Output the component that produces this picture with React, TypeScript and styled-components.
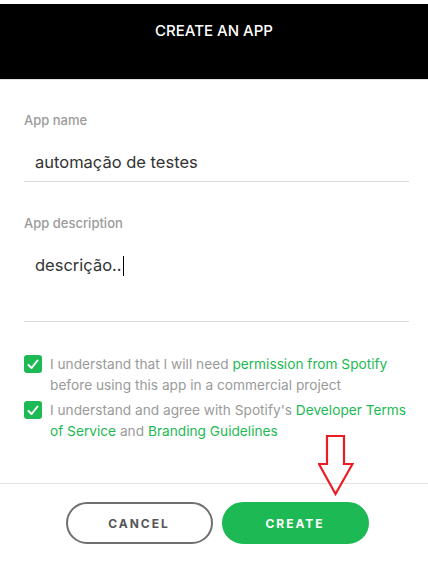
import React from "react";
import styled, { createGlobalStyle } from "styled-components";

const Global = createGlobalStyle`
  html, body { margin: 0; padding: 0; background: #fff; }
  body { font-family: Inter, "Noto Sans", Arial, sans-serif; }
  * { box-sizing: border-box; }
`;

const Page = styled.div`
  position: relative;
  width: 428px;
  height: 565px;
  padding-top: 4px;
  background: #fff;
  overflow: hidden;
`;

const Header = styled.header`
  height: 76px;
  background: #000;
  border-bottom: 1px solid #e0e0e0;
  display: flex;
  justify-content: center;
  padding-top: 19px;
`;

const Title = styled.h1`
  margin: 0;
  color: #fff;
  font-size: 15px;
  font-weight: 500;
  line-height: 15px;
  letter-spacing: 0;
`;

const Body = styled.div`
  padding: 32px 19px 0 24px;
  display: flex;
  flex-direction: column;
`;

const Field = styled.div<{ $height: number; $gap: number }>`
  display: flex;
  flex-direction: column;
  height: ${(p) => p.$height}px;
  border-bottom: 1px solid #dcdcdc;
  margin-bottom: ${(p) => p.$gap}px;
`;

const Label = styled.label`
  color: #9b9b9b;
  font-size: 13px;
  font-weight: 500;
  line-height: 16px;
`;

const Value = styled.div`
  margin-top: 24px;
  padding-left: 11px;
  color: #333;
  font-size: 16.5px;
  line-height: 20px;
  white-space: nowrap;
`;

const Caret = styled.span`
  display: inline-block;
  width: 1px;
  height: 20px;
  background: #000;
  vertical-align: top;
  margin-left: 1px;
  transform: translateY(1px);
`;

const Checks = styled.div`
  display: flex;
  flex-direction: column;
  gap: 5px;
`;

const CheckRow = styled.div`
  display: flex;
  align-items: flex-start;
  gap: 8px;
`;

const Box = styled.span`
  flex: none;
  width: 18px;
  height: 18px;
  margin-top: 1px;
  border-radius: 3px;
  background: #1db954;
  display: flex;
  align-items: center;
  justify-content: center;
`;

const CheckText = styled.p`
  margin: 0;
  color: #9a9a9a;
  font-size: 13.7px;
  line-height: 20.5px;
`;

const Link = styled.a`
  color: #1db954;
  text-decoration: none;
`;

const Footer = styled.footer`
  position: absolute;
  left: 0;
  right: 0;
  top: 483px;
  border-top: 1px solid #e2e2e2;
  display: flex;
  justify-content: center;
  gap: 9px;
  padding-top: 18px;
  padding-left: 6px;
`;

const Button = styled.button<{ $primary?: boolean }>`
  width: 147px;
  height: 42px;
  border-radius: 21px;
  border: 2px solid ${(p) => (p.$primary ? "#1db954" : "#6f6f6f")};
  background: ${(p) => (p.$primary ? "#1db954" : "#fff")};
  color: ${(p) => (p.$primary ? "#fff" : "#555")};
  font-family: Inter, "Noto Sans", Arial, sans-serif;
  font-size: 12px;
  font-weight: 700;
  letter-spacing: 2px;
  cursor: pointer;
`;

const Arrow = styled.svg`
  position: absolute;
  left: 318px;
  top: 435px;
`;

const Check = () => (
  <svg width="12" height="11" viewBox="0 0 12 11">
    <path d="M1.5 6 L4.6 9 L10.5 1.5" fill="none" stroke="#fff" strokeWidth="2" strokeLinecap="round" strokeLinejoin="round" />
  </svg>
);

export default function App() {
  return (
    <>
      <Global />
      <Page>
        <Header>
          <Title>CREATE AN APP</Title>
        </Header>
        <Body>
          <Field $height={70} $gap={33}>
            <Label>App name</Label>
            <Value>automação de testes</Value>
          </Field>
          <Field $height={107} $gap={32}>
            <Label>App description</Label>
            <Value>
              descrição..
              <Caret />
            </Value>
          </Field>
          <Checks>
            <CheckRow>
              <Box>
                <Check />
              </Box>
              <CheckText>
                I understand that I will need <Link>permission from Spotify</Link> before using this app in a commercial project
              </CheckText>
            </CheckRow>
            <CheckRow>
              <Box>
                <Check />
              </Box>
              <CheckText>
                I understand and agree with Spotify's <Link>Developer Terms</Link> <Link>of Service</Link> and <Link>Branding Guidelines</Link>
              </CheckText>
            </CheckRow>
          </Checks>
        </Body>
        <Footer>
          <Button>CANCEL</Button>
          <Button $primary>CREATE</Button>
        </Footer>
        <Arrow width="36" height="62" viewBox="0 0 36 62">
          <path d="M9 1 H26 V29 H34.5 L17.5 59 L1 29 H9 Z" fill="none" stroke="#ed1c24" strokeWidth="2.2" />
        </Arrow>
      </Page>
    </>
  );
}
